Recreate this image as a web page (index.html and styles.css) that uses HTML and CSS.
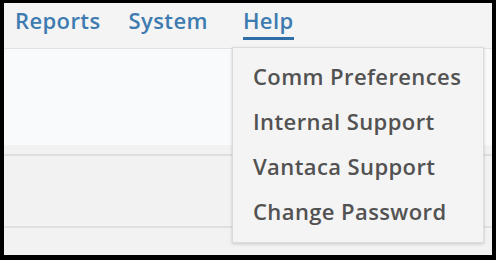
FILE: index.html
```html
<!DOCTYPE html>
<html lang="en">
<head>
  <meta charset="UTF-8">
  <title>Help menu</title>
  <link rel="stylesheet" href="styles.css">
</head>
<body>
  <div class="frame">
    <nav class="topnav">
      <a class="navlink" href="#">Reports</a>
      <a class="navlink" href="#">System</a>
      <a class="navlink active" href="#">Help</a>
      <ul class="dropdown">
        <li>Comm Preferences</li>
        <li>Internal Support</li>
        <li>Vantaca Support</li>
        <li>Change Password</li>
      </ul>
    </nav>
    <div class="panel"></div>
    <div class="strip"></div>
    <div class="row"></div>
    <div class="row last"></div>
  </div>
</body>
</html>
```

FILE: styles.css
```css
html, body { margin: 0; height: 100%; }
body { background: #000; padding: 3px 4px 5px 4px; box-sizing: border-box; font-family: "Open Sans", Arial, sans-serif; }
.frame { background: #f2f2f2; height: 100%; overflow: hidden; display: flex; flex-direction: column; }
.topnav { position: relative; height: 45px; background: #f4f4f4; display: flex; align-items: flex-start; padding-left: 11px; gap: 28px; border-bottom: 1px solid #e2e2e2; }
.navlink { color: #3d7bb0; text-decoration: none; font-size: 22px; font-weight: 600; letter-spacing: 0.4px; line-height: 33px; padding-top: 1px; border-bottom: 3px solid transparent; }
.navlink.active { border-bottom-color: #2f6ea6; margin-left: 7px; }
.dropdown { position: absolute; left: 228px; top: 44px; width: 250px; margin: 0; padding: 6px 0 8px 0; list-style: none; background: #f4f4f4; border: 1px solid #dcdcdc; box-shadow: 0 1px 3px rgba(0,0,0,0.18); z-index: 2; }
.dropdown li { color: #525252; font-size: 22px; font-weight: 600; letter-spacing: 0.4px; line-height: 45px; padding-left: 20px; }
.panel { height: 96px; background: #f9fafc; }
.strip { height: 9px; background: #f2f2f2; border-bottom: 2px solid #dedede; }
.row { height: 70px; background: #f2f2f2; border-bottom: 2px solid #e0e0e0; }
.row.last { flex: 1; border-bottom: 0; }
```
